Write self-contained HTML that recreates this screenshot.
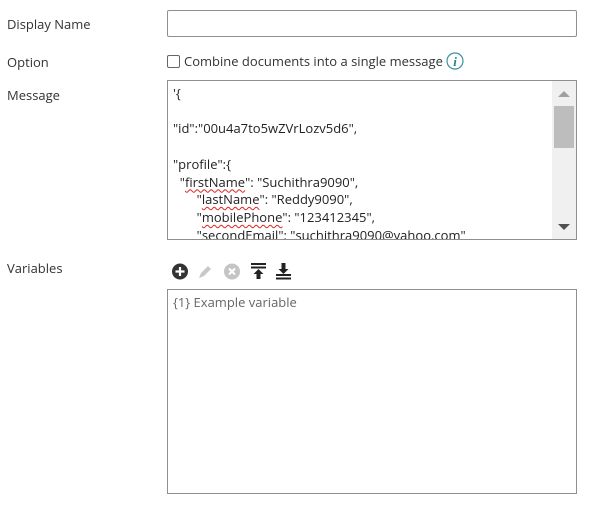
<!DOCTYPE html>
<html><head><style>
body{margin:0;width:601px;height:524px;background:#fff;font-family:"Open Sans","Liberation Sans",sans-serif;font-size:13px;color:#333;position:relative;overflow:hidden}
.a{position:absolute}
.lbl{left:7px}
.box{border:1px solid #8f8f8f;background:#fff;box-sizing:border-box}
.ta{left:167px;top:80px;width:410px;height:160px;overflow:hidden}
.ta pre{margin:0;position:absolute;left:5px;top:4px;font-family:inherit;font-size:13px;line-height:17.7px;color:#222}
.sq{text-decoration:underline wavy #e02020;text-decoration-thickness:1px;text-underline-offset:2px}
.sb{position:absolute;right:0;top:0;width:24px;height:158px;background:#f0f0f0}
</style></head><body>
<div class="a lbl" style="top:15px">Display Name</div>
<div class="a box" style="left:167px;top:10px;width:410px;height:27px;border-radius:2px"></div>
<div class="a lbl" style="top:53px">Option</div>
<div class="a" style="left:167px;top:55px;width:13px;height:13px;border:1px solid #666;border-radius:2px;box-sizing:border-box"></div>
<div class="a" style="left:184px;top:52px">Combine documents into a single message</div>
<svg class="a" style="left:446px;top:52px" width="18" height="18" viewBox="0 0 18 18"><circle cx="9" cy="9" r="8" fill="#fff" stroke="#3a8fa0" stroke-width="1.2"/><text x="9" y="14" text-anchor="middle" font-family="Liberation Serif" font-style="italic" font-weight="bold" font-size="13" fill="#2a7f90">i</text></svg>
<div class="a lbl" style="top:86px">Message</div>
<div class="a box ta">
<pre>'{

"id":"00u4a7to5wZVrLozv5d6",

"profile":{
  "<span class="sq">firstName</span>": "Suchithra9090",
       "<span class="sq">lastName</span>": "Reddy9090",
       "<span class="sq">mobilePhone</span>": "123412345",
       "secondEmail": "suchithra9090@yahoo.com"</pre>
<div class="sb">
<svg class="a" style="left:5px;top:9px" width="14" height="8"><path d="M1 7L7 1L13 7Z" fill="#a0a0a0"/></svg>
<div class="a" style="left:2px;top:25px;width:20px;height:42px;background:#bdbdbd"></div>
<svg class="a" style="left:5px;top:142px" width="14" height="8"><path d="M1 1L7 7L13 1Z" fill="#505050"/></svg>
</div></div>
<div class="a lbl" style="top:259px">Variables</div>
<svg class="a" style="left:171px;top:262px" width="125" height="19" viewBox="0 0 125 19">
<circle cx="9" cy="9.5" r="8" fill="#333"/><path d="M9 5v9M4.5 9.5h9" stroke="#fff" stroke-width="2.2"/>
<path d="M28 16l2-5 7-7 3 3-7 7z" fill="#c8c8c8"/>
<circle cx="61" cy="9.5" r="8" fill="#c4c4c4"/><path d="M58 6.5l6 6M64 6.5l-6 6" stroke="#fff" stroke-width="2"/>
<path d="M80 2h15M80 5.5h15" stroke="#222" stroke-width="2"/><path d="M87.5 7l-5 5h3v5h4v-5h3z" fill="#222"/>
<path d="M105 13h15M105 16.5h15" stroke="#222" stroke-width="2"/><path d="M112.5 12l-5-5h3V1h4v6h3z" fill="#222"/>
</svg>
<div class="a box" style="left:167px;top:289px;width:410px;height:205px"></div>
<div class="a" style="left:173px;top:293px;color:#666">{1} Example variable</div>
</body></html>
